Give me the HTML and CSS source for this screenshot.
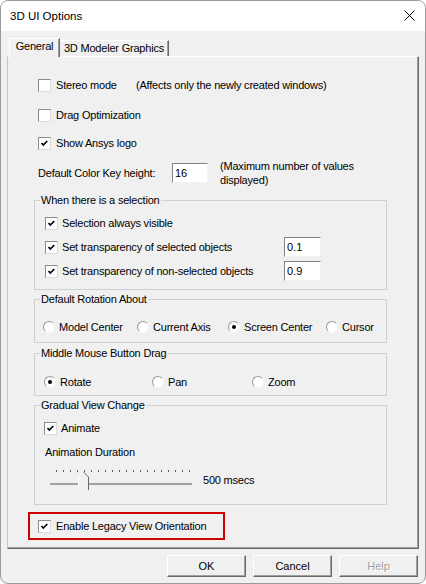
FILE: index.html
```html
<!DOCTYPE html>
<html lang="en">
<head>
  <meta charset="UTF-8">
  <meta name="viewport" content="width=device-width, initial-scale=1.0">
  <title>3D UI Options</title>
  <link rel="stylesheet" href="styles.css">
</head>
<body>

<div class="window">
  <div class="titlebar">
    <span class="title">3D UI Options</span>
    <svg class="close" width="11" height="11" viewBox="0 0 11 11"><path d="M0.5 0.5 L10.5 10.5 M10.5 0.5 L0.5 10.5" stroke="#000" stroke-width="1" fill="none"/></svg>
  </div>

  <div class="tabs">
    <div class="tab active">General</div>
    <div class="tab">3D Modeler Graphics</div>
  </div>

  <div class="panel">
    <div class="row first">
      <span class="check"></span>
      <span class="stereo">Stereo mode</span>
      <span>(Affects only the newly created windows)</span>
    </div>
    <div class="row r2">
      <span class="check"></span>
      <span>Drag Optimization</span>
    </div>
    <div class="row r3">
      <span class="check"><svg width="11" height="11" viewBox="0 0 11 11"><path d="M2.5 5 L4.3 7 L8.3 3" fill="none" stroke="#000" stroke-width="1.6"/></svg></span>
      <span>Show Ansys logo</span>
    </div>
    <div class="row r4">
      <span class="key-label">Default Color Key height:</span>
      <input class="field key" value="16">
      <span class="key-note">(Maximum number of values displayed)</span>
    </div>

    <fieldset class="group g1">
      <legend>When there is a selection</legend>
      <div class="grow">
        <span class="check"><svg width="11" height="11" viewBox="0 0 11 11"><path d="M2.5 5 L4.3 7 L8.3 3" fill="none" stroke="#000" stroke-width="1.6"/></svg></span>
        <span>Selection always visible</span>
      </div>
      <div class="grow">
        <span class="check"><svg width="11" height="11" viewBox="0 0 11 11"><path d="M2.5 5 L4.3 7 L8.3 3" fill="none" stroke="#000" stroke-width="1.6"/></svg></span>
        <span class="sel-label">Set transparency of selected objects</span>
        <input class="field alpha" value="0.1">
      </div>
      <div class="grow">
        <span class="check"><svg width="11" height="11" viewBox="0 0 11 11"><path d="M2.5 5 L4.3 7 L8.3 3" fill="none" stroke="#000" stroke-width="1.6"/></svg></span>
        <span class="sel-label">Set transparency of non-selected objects</span>
        <input class="field alpha" value="0.9">
      </div>
    </fieldset>

    <fieldset class="group g2">
      <legend>Default Rotation About</legend>
      <div class="radios">
        <span class="opt"><span class="radio"></span>Model Center</span>
        <span class="opt"><span class="radio"></span>Current Axis</span>
        <span class="opt"><span class="radio on"></span>Screen Center</span>
        <span class="opt"><span class="radio"></span>Cursor</span>
      </div>
    </fieldset>

    <fieldset class="group g3">
      <legend>Middle Mouse Button Drag</legend>
      <div class="radios">
        <span class="opt"><span class="radio on"></span>Rotate</span>
        <span class="opt"><span class="radio"></span>Pan</span>
        <span class="opt"><span class="radio"></span>Zoom</span>
      </div>
    </fieldset>

    <fieldset class="group g4">
      <legend>Gradual View Change</legend>
      <div class="grow">
        <span class="check"><svg width="11" height="11" viewBox="0 0 11 11"><path d="M2.5 5 L4.3 7 L8.3 3" fill="none" stroke="#000" stroke-width="1.6"/></svg></span>
        <span>Animate</span>
      </div>
      <div class="grow duration">Animation Duration</div>
      <div class="slider-row">
        <svg class="slider" width="150" height="24" viewBox="0 0 150 24">
          <g fill="#5c5c5c">
            <rect x="8" y="4" width="1" height="2"/><rect x="15" y="4" width="1" height="2"/>
            <rect x="22" y="4" width="1" height="2"/><rect x="29" y="4" width="1" height="2"/>
            <rect x="36" y="4" width="1" height="2"/><rect x="43" y="4" width="1" height="2"/>
            <rect x="50" y="4" width="1" height="2"/><rect x="57" y="4" width="1" height="2"/>
            <rect x="64" y="4" width="1" height="2"/><rect x="71" y="4" width="1" height="2"/>
            <rect x="78" y="4" width="1" height="2"/><rect x="85" y="4" width="1" height="2"/>
            <rect x="92" y="4" width="1" height="2"/><rect x="99" y="4" width="1" height="2"/>
            <rect x="106" y="4" width="1" height="2"/><rect x="113" y="4" width="1" height="2"/>
            <rect x="120" y="4" width="1" height="2"/><rect x="127" y="4" width="1" height="2"/>
            <rect x="134" y="4" width="1" height="2"/><rect x="141" y="4" width="1" height="2"/>
          </g>
          <rect x="2" y="17" width="142" height="2" fill="#a0a0a0"/>
          <path d="M30 24 V11 L35.5 5.5 L41 11 V24 Z" fill="#f0f0f0"/>
          <path d="M30.5 23 V11 L35.5 6" stroke="#fff" fill="none"/>
          <path d="M35.5 6 L40.5 11 V24" stroke="#696969" fill="none"/>
        </svg>
        <span class="msecs">500 msecs</span>
      </div>
    </fieldset>

    <div class="legacy">
      <span class="check"><svg width="11" height="11" viewBox="0 0 11 11"><path d="M2.5 5 L4.3 7 L8.3 3" fill="none" stroke="#000" stroke-width="1.6"/></svg></span>
      <span>Enable Legacy View Orientation</span>
    </div>
  </div>

  <div class="buttons">
    <button type="button">OK</button>
    <button type="button">Cancel</button>
    <button type="button" class="disabled">Help</button>
  </div>
</div>

</body>
</html>
```

FILE: styles.css
```css
* { box-sizing: border-box; }
body { margin: 0; background: #fff; font: 11px/14px "Liberation Sans", Arial, sans-serif; letter-spacing: -0.2px; color: #000; }

.window { width: 426px; height: 584px; border: 1px solid #9a9a9a; border-radius: 8px; background: #f0f0f0; overflow: hidden; }
.titlebar { height: 30px; background: #fff; display: flex; align-items: center; justify-content: space-between; padding: 0 10px 0 9px; letter-spacing: 0; }
.title { font-size: 11.5px; }
.close { margin-top: -1px; }

.tabs { display: flex; align-items: flex-end; height: 18px; margin: 7px 0 0 8px; }
.tab { height: 16px; width: 109px; text-align: center; border-top: 1px solid #fff; border-right: 1px solid #696969; box-shadow: inset -1px 0 #a0a0a0; }
.tab.active { position: relative; z-index: 1; width: 51px; height: 19px; margin-bottom: -1px; background: #f0f0f0; border-left: 1px solid #fff; }

.panel { width: 412px; height: 493px; margin-left: 6px; padding-left: 26px; border: 1px solid; border-color: #fff #696969 #696969 #c4c4c4; box-shadow: inset -1px -1px #a0a0a0; }

.row { display: flex; align-items: center; height: 20px; padding-left: 4px; }
.first { margin-top: 18px; }
.r2 { margin-top: 10px; }
.r3 { margin-top: 8px; }
.r4 { margin-top: 10px; }

.check { flex-shrink: 0; width: 13px; height: 13px; margin-right: 5px; background: #fff; border: 1px solid; border-color: #8d8d8d #dcdcdc #dcdcdc #8d8d8d; }
.check svg { display: block; }
.stereo { width: 80px; }
.key-label { width: 134px; }
.key-note { width: 150px; margin-left: 12px; }

.field { height: 20px; padding: 0 2px; font: inherit; color: #000; background: #fff; border: 1px solid; border-color: #828282 #f4f4f4 #f4f4f4 #828282; outline: none; }
.key { width: 36px; }
.alpha { width: 37px; }

.group { width: 353px; min-width: 0; margin: 0; border: 1px solid #d0d0d0; }
.group legend { padding: 0 1px; line-height: 14px; }
.grow { display: flex; align-items: center; height: 20px; }
.grow + .grow { margin-top: 4px; }
.group .check { margin-right: 4px; }
.sel-label { width: 222px; }

.g1 { margin-top: 10px; padding: 6px 0 8px 10px; }
.g1 legend { margin-left: -5px; }
.g2 { margin-top: 2px; padding: 11px 0 5px 8px; }
.g2 legend { margin-left: -3px; }
.g3 { margin-top: 3px; padding: 12px 0 3px 9px; }
.g3 legend { margin-left: -4px; }
.g4 { margin-top: 2px; padding: 6px 0 14px 9px; }
.g4 legend { margin-left: -4px; }

.radios { display: grid; height: 20px; align-items: center; }
.g2 .radios { grid-template-columns: 94px 91px 98px auto; }
.g3 .radios { grid-template-columns: 108px 100px auto; }
.opt { display: flex; align-items: center; }
.radio { flex-shrink: 0; width: 12px; height: 12px; margin-right: 4px; border-radius: 50%; background: #fff; border: 1px solid; border-color: #9a9a9a #f4f4f4 #f4f4f4 #9a9a9a; display: flex; align-items: center; justify-content: center; }
.radio.on::after { content: ""; width: 4px; height: 4px; border-radius: 50%; background: #000; }

.duration { padding-left: 1px; }
.slider-row { display: flex; align-items: flex-start; margin-top: 4px; height: 24px; }
.slider { display: block; margin-left: 4px; }
.msecs { margin-left: 5px; padding-top: 7px; }

.legacy { display: flex; align-items: center; width: 197px; height: 28px; margin: 7px 0 0 -6px; padding-left: 8px; border: 2px solid #cc0000; }

.buttons { display: flex; gap: 7px; margin: 6px 0 0 166px; }
button { width: 79px; height: 22px; padding: 0; font: inherit; color: #000; background: #f0f0f0; border: 1px solid; border-color: #fff #696969 #696969 #fff; box-shadow: inset -1px -1px #a0a0a0; }
button.disabled { color: #a0a0a0; text-shadow: 1px 1px #fff; }
```
